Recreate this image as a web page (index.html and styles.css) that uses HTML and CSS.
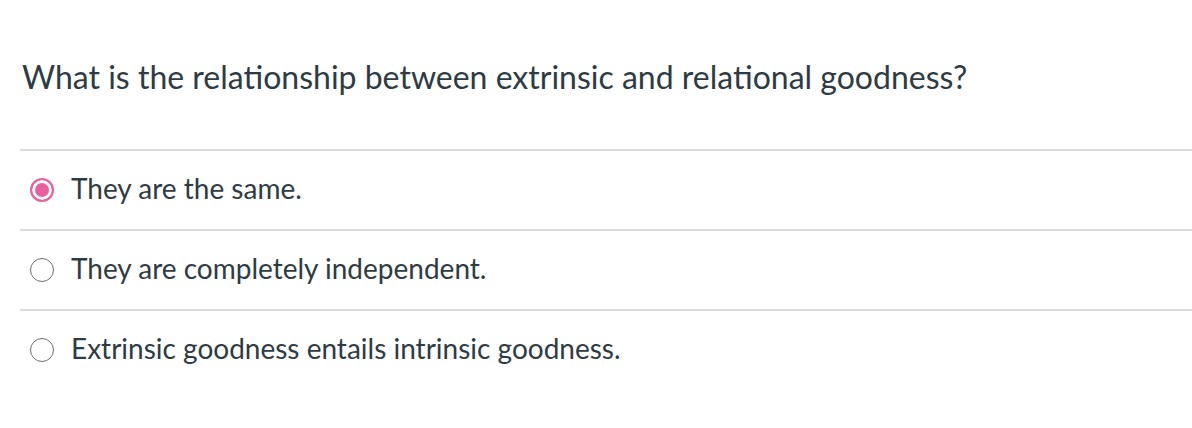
FILE: index.html
```html
<!DOCTYPE html>
<html lang="en">
<head>
    <meta charset="UTF-8">
    <meta name="viewport" content="width=device-width, initial-scale=1.0">
    <title>Quiz Question</title>
    <link rel="stylesheet" href="styles.css">
</head>
<body>
    <div class="question">
        <div class="question-text">What is the relationship between extrinsic and relational goodness?</div>

        <div class="answers">
            <label class="answer">
                <input type="radio" name="q1" checked>
                <span class="radio"></span>
                <span class="answer-text">They are the same.</span>
            </label>
            <label class="answer">
                <input type="radio" name="q1">
                <span class="radio"></span>
                <span class="answer-text">They are completely independent.</span>
            </label>
            <label class="answer">
                <input type="radio" name="q1">
                <span class="radio"></span>
                <span class="answer-text">Extrinsic goodness entails intrinsic goodness.</span>
            </label>
        </div>
    </div>
</body>
</html>
```

FILE: styles.css
```css
/* Basic styling */
body {
    font-family: Lato, "Open Sans", sans-serif;
    margin: 0;
    padding: 0;
    background-color: #fff;
    color: #2d3b45;
}

.question {
    padding-left: 20px;
}

.question-text {
    font-size: 32px;
    line-height: 40px;
    padding: 57px 0 0 2px;
    height: 92px;
}

.answers {
    border-top: 2px solid #dcdcdc;
}

.answer {
    display: flex;
    align-items: center;
    height: 78px;
    border-bottom: 2px solid #dcdcdc;
    cursor: pointer;
}

.answer:last-child {
    border-bottom: none;
}

.answer input {
    display: none;
}

.radio {
    width: 24px;
    height: 24px;
    border: 1.5px solid #6b6b6b;
    border-radius: 50%;
    margin: 0 17px 0 10px;
    box-sizing: border-box;
}

.answer input:checked + .radio {
    border: 2px solid #e8609f;
    background-color: #e8609f;
    box-shadow: inset 0 0 0 3px #fff;
}

.answer-text {
    font-size: 28px;
    padding-bottom: 4px;
}
```
